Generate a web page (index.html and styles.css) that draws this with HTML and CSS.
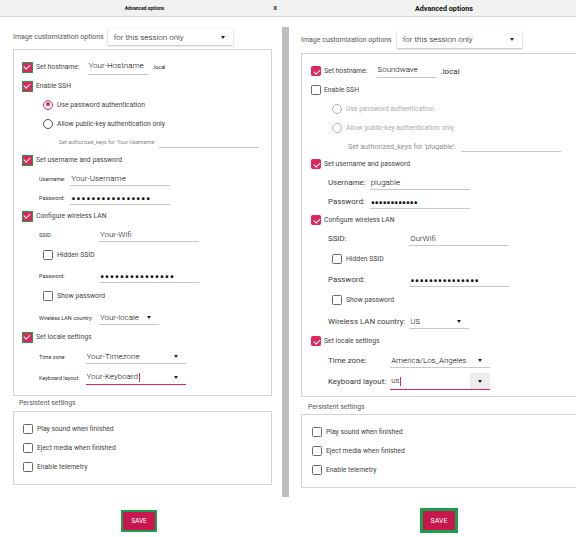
FILE: index.html
```html
<!DOCTYPE html>
<html lang="en">

<head>
    <meta charset="UTF-8">
    <meta name="viewport" content="width=device-width, initial-scale=1.0">
    <title>Advanced options</title>
    <link rel="stylesheet" href="styles.css">
</head>

<body>
    <div class="topbar">
        <div class="top-a">
            <span></span>
            <b class="title">Advanced options</b>
            <span class="close">X</span>
        </div>
        <div class="top-b">
            <b class="title">Advanced options</b>
        </div>
    </div>

    <div class="panes">
        <!-- left dialog -->
        <div class="pane pane-a">
            <div class="custom-row">
                <span class="custom-label">Image customization options</span>
                <div class="dropdown"><span>for this session only</span><span class="caret"></span></div>
            </div>

            <div class="box main-box">
                <div class="row row-host">
                    <span class="cb on"></span><span class="lbl">Set hostname:</span>
                    <span class="input host-input">Your-Hostname</span><span class="suffix">.local</span>
                </div>
                <div class="row">
                    <span class="cb on"></span><span class="lbl">Enable SSH</span>
                </div>
                <div class="row row-radio">
                    <span class="radio on"></span><span class="lbl">Use password authentication</span>
                </div>
                <div class="row row-radio">
                    <span class="radio"></span><span class="lbl">Allow public-key authentication only</span>
                </div>
                <div class="row row-keys">
                    <span class="keys-label">Set authorized_keys for 'Your-Username':</span>
                    <span class="keys-line"></span>
                </div>
                <div class="row">
                    <span class="cb on"></span><span class="lbl">Set username and password</span>
                </div>
                <div class="fields user-grid">
                    <span class="flabel">Username:</span><span class="input">Your-Username</span>
                    <span class="flabel">Password:</span><span class="input dots">••••••••••••••••</span>
                </div>
                <div class="row">
                    <span class="cb on"></span><span class="lbl">Configure wireless LAN</span>
                </div>
                <div class="fields wifi-grid">
                    <span class="flabel">SSID:</span><span class="input">Your-Wifi</span>
                    <div class="sub"><span class="cb"></span><span class="lbl">Hidden SSID</span></div>
                    <span class="flabel">Password:</span><span class="input dots">•••••••••••••••</span>
                    <div class="sub"><span class="cb"></span><span class="lbl">Show password</span></div>
                    <span class="flabel">Wireless LAN country:</span>
                    <span class="input select short"><span>Your-locale</span><span class="caret"></span></span>
                </div>
                <div class="row">
                    <span class="cb on"></span><span class="lbl">Set locale settings</span>
                </div>
                <div class="fields locale-grid">
                    <span class="flabel">Time zone:</span>
                    <span class="input select"><span>Your-Timezone</span><span class="caret"></span></span>
                    <span class="flabel">Keyboard layout:</span>
                    <span class="input select focus"><span>Your-Keyboard<i class="cursor"></i></span><span class="caret"></span></span>
                </div>
            </div>

            <div class="section-title">Persistent settings</div>
            <div class="box persist-box">
                <div class="prow"><span class="cb"></span><span class="lbl">Play sound when finished</span></div>
                <div class="prow"><span class="cb"></span><span class="lbl">Eject media when finished</span></div>
                <div class="prow"><span class="cb"></span><span class="lbl">Enable telemetry</span></div>
            </div>

            <div class="footer">
                <button class="save">SAVE</button>
            </div>
        </div>

        <div class="strip"></div>

        <!-- right dialog -->
        <div class="pane pane-b">
            <div class="custom-row">
                <span class="custom-label">Image customization options</span>
                <div class="dropdown"><span>for this session only</span><span class="caret"></span></div>
            </div>

            <div class="box main-box">
                <div class="row row-host">
                    <span class="cb on"></span><span class="lbl">Set hostname:</span>
                    <span class="input host-input">Soundwave</span><span class="suffix">.local</span>
                </div>
                <div class="row">
                    <span class="cb"></span><span class="lbl">Enable SSH</span>
                </div>
                <div class="row row-radio disabled">
                    <span class="radio"></span><span class="lbl">Use password authentication</span>
                </div>
                <div class="row row-radio disabled">
                    <span class="radio"></span><span class="lbl">Allow public-key authentication only</span>
                </div>
                <div class="row row-keys">
                    <span class="keys-label">Set authorized_keys for 'plugable':</span>
                    <span class="keys-line"></span>
                </div>
                <div class="row">
                    <span class="cb on"></span><span class="lbl">Set username and password</span>
                </div>
                <div class="fields user-grid">
                    <span class="flabel">Username:</span><span class="input">plugable</span>
                    <span class="flabel">Password:</span><span class="input dots">••••••••••••</span>
                </div>
                <div class="row">
                    <span class="cb on"></span><span class="lbl">Configure wireless LAN</span>
                </div>
                <div class="fields wifi-grid">
                    <span class="flabel">SSID:</span><span class="input">OurWifi</span>
                    <div class="sub"><span class="cb"></span><span class="lbl">Hidden SSID</span></div>
                    <span class="flabel">Password:</span><span class="input dots">•••••••••••••••</span>
                    <div class="sub"><span class="cb"></span><span class="lbl">Show password</span></div>
                    <span class="flabel">Wireless LAN country:</span>
                    <span class="input select short"><span>US</span><span class="caret"></span></span>
                </div>
                <div class="row">
                    <span class="cb on"></span><span class="lbl">Set locale settings</span>
                </div>
                <div class="fields locale-grid">
                    <span class="flabel">Time zone:</span>
                    <span class="input select"><span>America/Los_Angeles</span><span class="caret"></span></span>
                    <span class="flabel">Keyboard layout:</span>
                    <span class="input select focus"><span>us<i class="cursor"></i></span><span class="caret-box"><span class="caret"></span></span></span>
                </div>
            </div>

            <div class="section-title">Persistent settings</div>
            <div class="box persist-box">
                <div class="prow"><span class="cb"></span><span class="lbl">Play sound when finished</span></div>
                <div class="prow"><span class="cb"></span><span class="lbl">Eject media when finished</span></div>
                <div class="prow"><span class="cb"></span><span class="lbl">Enable telemetry</span></div>
            </div>

            <div class="footer">
                <button class="save">SAVE</button>
            </div>
        </div>
    </div>
</body>

</html>
```

FILE: styles.css
```css
* {
    box-sizing: border-box;
}

body {
    margin: 0;
    width: 576px;
    height: 537px;
    overflow: hidden;
    background-color: #fff;
    color: #444;
    font-family: Roboto, "Liberation Sans", sans-serif;
}

/* header bar across both dialogs */
.topbar {
    display: flex;
    height: 17px;
    background-color: #f1f1f1;
    border-bottom: 1px solid #dadada;
    color: #111;
}

.top-a {
    width: 289px;
    flex-shrink: 0;
    display: grid;
    grid-template-columns: 1fr auto 1fr;
    align-items: center;
    font-size: 4.9px;
}

.top-a .close {
    justify-self: end;
    padding-right: 12px;
    font-weight: bold;
    font-size: 5.5px;
}

.top-b {
    width: 300px;
    flex-shrink: 0;
    display: flex;
    align-items: center;
    justify-content: center;
    padding-left: 10px;
    font-size: 7.2px;
}

.panes {
    display: flex;
}

.pane,
.strip {
    flex-shrink: 0;
}

.pane-a {
    width: 282px;
    padding: 0 10px 0 13px;
}

.pane-b {
    width: 300px;
    padding: 0 12px;
}

.strip {
    width: 7px;
    height: 470px;
    margin-top: 10px;
    background-color: #bdbdbd;
}

/* image customization dropdown */
.custom-row {
    display: flex;
    align-items: center;
    margin-top: 12px;
    height: 16px;
}

.custom-label {
    font-size: 7px;
    color: #555;
}

.dropdown {
    width: 125px;
    height: 16px;
    margin-left: 4px;
    padding: 0 8px 0 6px;
    display: flex;
    align-items: center;
    justify-content: space-between;
    font-size: 8px;
    font-weight: 300;
    color: #000;
    box-shadow: 0 1px 2px rgba(0, 0, 0, 0.25), 0 0 1px rgba(0, 0, 0, 0.15);
}

.pane-b .custom-row {
    margin-top: 14px;
    height: 17px;
}

.pane-b .dropdown {
    height: 17px;
    margin-left: 5px;
}

.caret {
    width: 0;
    height: 0;
    border-left: 2.5px solid transparent;
    border-right: 2.5px solid transparent;
    border-top: 3px solid #222;
}

/* boxes */
.box {
    border: 1px solid #d4d4d4;
}

.main-box {
    margin-top: 4px;
    padding: 7px 0 7px 8px;
}

.pane-b .main-box {
    margin-top: 5px;
    padding: 7px 0 4px 9px;
}

.row {
    display: flex;
    align-items: center;
    height: 18px;
}

.row-host {
    height: 20px;
}

.row-radio {
    height: 19px;
    padding-left: 21px;
}

.row-keys {
    padding-left: 37px;
}

.lbl {
    font-size: 6.8px;
    color: #444;
    margin-left: 3px;
}

.row-radio .lbl {
    margin-left: 4px;
}

.disabled .lbl {
    color: #ababab;
}

/* checkbox */
.cb {
    width: 10px;
    height: 10px;
    flex-shrink: 0;
    border: 1px solid #6a6a6a;
    border-radius: 1.5px;
    position: relative;
}

.cb.on {
    background-color: #e0245e;
    border-color: #e0245e;
}

.pane-a .cb.on {
    width: 11px;
    height: 11px;
    border: 1.5px solid #16a04a;
    border-radius: 0;
}

.cb.on::after {
    content: "";
    position: absolute;
    left: 2.8px;
    top: 0.8px;
    width: 2.5px;
    height: 5px;
    border: solid #fff;
    border-width: 0 1.3px 1.3px 0;
    transform: rotate(45deg);
}

.pane-a .cb.on::after {
    left: 2.3px;
    top: 0.5px;
}

/* radio */
.radio {
    width: 10px;
    height: 10px;
    flex-shrink: 0;
    border: 1.2px solid #555;
    border-radius: 50%;
    position: relative;
}

.radio.on {
    border-color: #e0245e;
}

.radio.on::after {
    content: "";
    position: absolute;
    left: 1.6px;
    top: 1.6px;
    width: 4.4px;
    height: 4.4px;
    border-radius: 50%;
    background-color: #e0245e;
}

.disabled .radio {
    border-color: #b0b0b0;
}

/* text inputs */
.input {
    display: flex;
    align-items: center;
    justify-content: space-between;
    height: 15px;
    align-self: center;
    border-bottom: 1px solid #c8c8c8;
    font-size: 8px;
    font-weight: 300;
    color: #000;
    padding-left: 1px;
}

.host-input {
    width: 61px;
    margin-left: 8px;
    padding-bottom: 2px;
}

.suffix {
    margin-left: 4px;
    font-size: 5.4px;
    color: #222;
}

.pane-b .host-input {
    width: 60px;
    margin-left: 9px;
    height: 14px;
}

.pane-b .suffix {
    font-size: 8px;
    color: #333;
}

.keys-label {
    font-size: 5.4px;
    color: #888;
}

.keys-line {
    width: 100px;
    height: 12px;
    margin-left: 3px;
    border-bottom: 1px solid #c8c8c8;
}

.pane-b .keys-label {
    font-size: 7.2px;
    color: #8f8f8f;
}

.pane-b .keys-line {
    margin-left: 5px;
}

/* label / field grids */
.fields {
    display: grid;
    grid-template-columns: auto 100px;
    justify-content: start;
    column-gap: 5px;
    align-items: center;
    padding-left: 17px;
}

.user-grid {
    grid-template-rows: 19px 19px;
}

.wifi-grid {
    grid-template-rows: 19px 22px 19px 22px 21px;
    column-gap: 6px;
}

.locale-grid {
    grid-template-rows: 21px 21px;
    column-gap: 6px;
}

.pane-b .fields {
    column-gap: 4px;
}

.flabel {
    font-size: 5.5px;
    color: #333;
}

.pane-b .flabel {
    font-size: 7.9px;
    color: #3a3a3a;
}

.pane-b .input {
    font-size: 7.9px;
}

.sub {
    grid-column: 1 / -1;
    display: flex;
    align-items: center;
    padding-left: 4px;
}

.sub .lbl {
    margin-left: 4px;
}

.input.dots {
    font-size: 13px;
    font-weight: 400;
    line-height: 1;
    letter-spacing: 0.6px;
    color: #111;
    justify-content: flex-start;
    padding-top: 2px;
}

.pane-b .user-grid .dots {
    letter-spacing: -0.5px;
}

.pane-b .wifi-grid .dots {
    letter-spacing: 0.2px;
}

.select {
    padding-right: 8px;
}

.select.short {
    width: 60px;
}

.select.focus {
    border-bottom: 1.5px solid #e0245e;
}

.cursor {
    display: inline-block;
    width: 1px;
    height: 9px;
    margin-left: 1px;
    vertical-align: middle;
    background-color: #e0245e;
}

.pane-b .select.focus {
    padding-right: 0;
    height: 17px;
}

.caret-box {
    width: 20px;
    height: 100%;
    display: flex;
    align-items: center;
    justify-content: center;
    background-color: #ececec;
}

/* persistent settings */
.section-title {
    height: 15px;
    line-height: 15px;
    padding-left: 6px;
    font-size: 6.8px;
    color: #555;
}

.pane-b .section-title {
    height: 17px;
    line-height: 17px;
    padding-top: 2px;
    padding-left: 7px;
}

.persist-box {
    padding: 7.5px 0 7.5px 9px;
}

.pane-b .persist-box {
    padding-left: 10px;
}

.prow {
    display: flex;
    align-items: center;
    height: 19px;
}

.prow .lbl {
    margin-left: 4px;
}

.footer {
    display: flex;
    justify-content: center;
    margin-top: 25px;
    padding-right: 7px;
}

.pane-b .footer {
    margin-top: 20px;
    padding-right: 0;
}

.save {
    width: 36px;
    height: 22px;
    padding: 0;
    border: 2px solid #18a04a;
    background-color: #c8174f;
    color: #fff;
    font-family: Roboto, "Liberation Sans", sans-serif;
    font-size: 6.5px;
}

.pane-b .save {
    width: 38px;
    height: 25px;
    border-width: 3px;
    font-size: 7px;
}
```
